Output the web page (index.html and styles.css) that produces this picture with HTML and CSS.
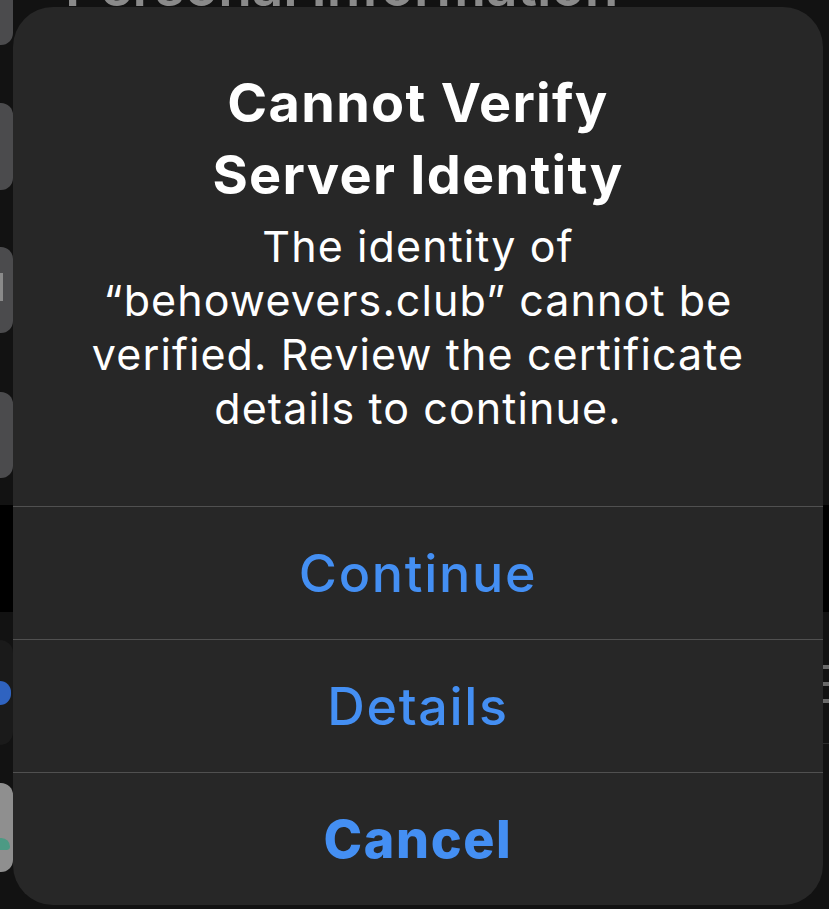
FILE: index.html
```html
<!DOCTYPE html>
<html lang="en">
<head>
<meta charset="utf-8">
<title>Cannot Verify Server Identity</title>
<link rel="stylesheet" href="styles.css">
</head>
<body>
  <div class="backdrop">
    <div class="rail rail-left">
      <div class="tile tile-top"></div>
      <div class="tile tile-2"></div>
      <div class="tile tile-3"><span class="tile-glyph"></span></div>
      <div class="tile tile-4"></div>
      <div class="band"></div>
      <div class="avatar-zone"><span class="avatar-dot"></span></div>
      <div class="photo-tile"><span class="photo-leaf"></span></div>
    </div>
    <div class="page-main">
      <div class="page-title">Personal Information</div>
    </div>
    <div class="rail rail-right">
      <div class="right-top"></div>
      <div class="band"></div>
      <div class="menu-icon"><span></span><span></span><span></span></div>
      <div class="right-sep"></div>
    </div>
  </div>

  <div class="alert" role="alertdialog" aria-labelledby="alert-title">
    <div class="alert-body">
      <h1 class="alert-title" id="alert-title">Cannot Verify<br>Server Identity</h1>
      <p class="alert-message">The identity of<br>“behowevers.club” cannot be<br>verified. Review the certificate<br>details to continue.</p>
    </div>
    <div class="alert-actions">
      <button class="action">Continue</button>
      <button class="action">Details</button>
      <button class="action action-cancel">Cancel</button>
    </div>
  </div>
</body>
</html>
```
FILE: styles.css
```css
html, body {
  margin: 0;
  padding: 0;
}
body {
  width: 829px;
  height: 909px;
  overflow: hidden;
  background: #121212;
  font-family: Inter, "Noto Sans", "Liberation Sans", sans-serif;
  position: relative;
}

/* ---------- backdrop (page underneath the alert) ---------- */
.backdrop {
  display: grid;
  grid-template-columns: 13px 1fr 6px;
  height: 909px;
}
.rail {
  display: flex;
  flex-direction: column;
}
.tile {
  background: #4b4b4d;
  border-radius: 0 12px 12px 0;
  height: 87px;
  position: relative;
}
.tile-top { height: 45px; border-radius: 0 0 12px 0; }
.tile-2 { margin-top: 58px; }
.tile-3 { margin-top: 57px; height: 86px; }
.tile-4 { margin-top: 59px; height: 86px; }
.tile-glyph {
  position: absolute;
  left: 0;
  top: 26px;
  width: 3px;
  height: 28px;
  background: #8a8a8a;
}
.band {
  background: #000;
  height: 107px;
  margin-top: 27px;
}
.avatar-zone {
  margin-top: 28px;
  height: 105px;
  background: #1a1a1a;
  border-radius: 0 52px 52px 0;
  display: flex;
  align-items: center;
}
.avatar-dot {
  width: 11px;
  height: 24px;
  background: #2f63c0;
  border-radius: 0 12px 12px 0;
}
.photo-tile {
  margin-top: 38px;
  height: 89px;
  background: #8f8f8f;
  border-radius: 0 12px 12px 0;
  display: flex;
  align-items: flex-end;
  padding-bottom: 22px;
  box-sizing: border-box;
}
.photo-leaf {
  width: 10px;
  height: 12px;
  background: #4c9a84;
  border-radius: 0 10px 4px 0;
}

.page-main { overflow: hidden; }
.page-title {
  margin: -46px 0 0 52px;
  font-size: 55px;
  font-weight: 600;
  color: #8a8a8a;
  white-space: nowrap;
  line-height: 64px;
}

.right-top {
  height: 505px;
}
.rail-right .band { margin-top: 0; }
.menu-icon {
  margin-top: 53px;
  display: flex;
  flex-direction: column;
  gap: 13px;
}
.menu-icon span {
  height: 4px;
  background: #6a6a6a;
}
.right-sep {
  margin-top: 40px;
  height: 1px;
  background: #2c2c2c;
}

/* ---------- alert ---------- */
.alert {
  position: absolute;
  left: 13px;
  top: 7px;
  width: 810px;
  height: 898px;
  background: #272727;
  border-radius: 40px;
  display: flex;
  flex-direction: column;
  overflow: hidden;
  color: #fff;
}
.alert-body {
  height: 499px;
  box-sizing: border-box;
  padding-top: 60px;
  text-align: center;
}
.alert-title {
  margin: 0;
  font-size: 54px;
  line-height: 72px;
  font-weight: 700;
  letter-spacing: 1.3px;
}
.alert-message {
  margin: 8px 0 0;
  font-size: 43px;
  line-height: 54px;
  font-weight: 400;
  letter-spacing: 1.1px;
}
.alert-actions {
  flex: 1;
  display: flex;
  flex-direction: column;
}
.action {
  flex: 1;
  border: 0;
  border-top: 1px solid #505050;
  background: transparent;
  color: #448ff3;
  font-family: inherit;
  font-size: 52px;
  font-weight: 500;
  letter-spacing: 1.7px;
  padding: 0;
  margin: 0;
}
.action-cancel {
  font-weight: 800;
  letter-spacing: 1.6px;
}
```
